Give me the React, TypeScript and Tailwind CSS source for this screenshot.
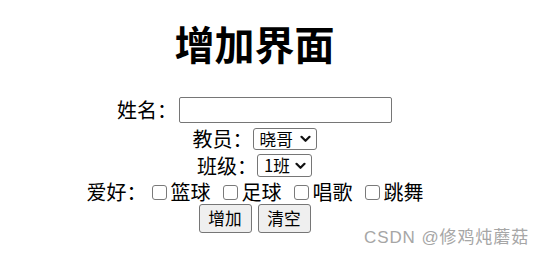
import React from "react";

const font = { fontFamily: '"Noto Sans CJK SC", "Noto Sans", sans-serif' };

function Chevron() {
  return (
    <svg width="11" height="8" viewBox="0 0 11 8" className="shrink-0">
      <path d="M1.5 1.8 L5.5 5.8 L9.5 1.8" fill="none" stroke="#111" strokeWidth="2.2" strokeLinecap="round" strokeLinejoin="round" />
    </svg>
  );
}

function FakeSelect({ value, width }: { value: string; width: string }) {
  return (
    <div className={`flex h-full items-center justify-between rounded-[3px] border border-[#767676] bg-white pl-[6px] pr-[5px] text-[16.7px] leading-none text-black ${width}`}>
      <span>{value}</span>
      <Chevron />
    </div>
  );
}

function Hobby({ label }: { label: string }) {
  return (
    <label className="flex shrink-0 items-center">
      <input type="checkbox" className="ml-[5px] mr-[4px] box-border h-[15px] w-[15px] shrink-0 appearance-none rounded-[3px] border border-[#7a7a7a] bg-white" />
      <span className="mr-[7px]">{label}</span>
    </label>
  );
}

export default function App() {
  return (
    <div className="relative h-[258px] w-[549px] overflow-hidden bg-white text-black" style={font}>
      <div className="flex w-[509px] flex-col items-center text-[20px] leading-none">
        <h1 className="mt-[23px] text-[40px] font-bold leading-[40px]">增加界面</h1>

        <div className="mt-[34px] flex h-[26px] items-center">
          <span>姓名：</span>
          <input type="text" className="ml-[2px] h-[26px] w-[213px] rounded-[2px] border border-[#767676] bg-white px-1 text-[16px]" />
        </div>

        <div className="mt-[5px] flex h-[22px] items-center">
          <span>教员：</span>
          <FakeSelect value="晓哥" width="w-[64px]" />
        </div>

        <div className="mt-[4px] flex h-[23px] items-center">
          <span>班级：</span>
          <FakeSelect value="1班" width="w-[55px]" />
        </div>

        <div className="mt-[5px] flex h-[20px] items-center pl-[8px]">
          <span>爱好：</span>
          <Hobby label="篮球" />
          <Hobby label="足球" />
          <Hobby label="唱歌" />
          <Hobby label="跳舞" />
        </div>

        <div className="mt-[2px] flex h-[29px] items-center gap-[6px]">
          <button className="h-[29px] w-[53px] rounded-[3px] border border-[#767676] bg-[#efefef] text-[16.7px] leading-none">增加</button>
          <button className="h-[29px] w-[53px] rounded-[3px] border border-[#767676] bg-[#efefef] text-[16.7px] leading-none">清空</button>
        </div>
      </div>

      <div
        className="absolute left-[364px] top-[228px] whitespace-nowrap text-[17px] leading-[20px] tracking-[0.9px] text-[#a6a6a6]"
        style={{ fontFamily: '"Liberation Sans", "Noto Sans CJK SC", sans-serif' }}
      >
        CSDN @修鸡炖蘑菇
      </div>
    </div>
  );
}
